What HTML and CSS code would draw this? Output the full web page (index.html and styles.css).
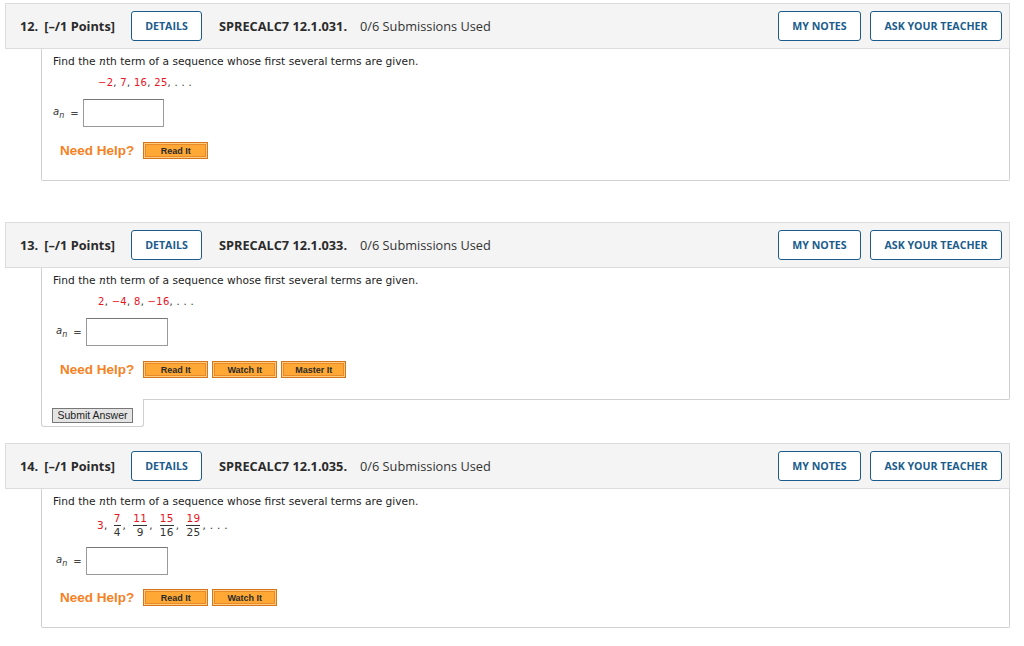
FILE: index.html
```html
<!DOCTYPE html>
<html>
<head>
<meta charset="utf-8">
<link rel="stylesheet" href="styles.css">
</head>
<body>
<div class="page">

  <section class="question">
    <div class="q-header">
      <span class="q-num">12.</span>
      <span class="q-points">[–/1 Points]</span>
      <span class="btn-outline details">DETAILS</span>
      <span class="q-code">SPRECALC7 12.1.031.</span>
      <span class="q-subs">0/6 Submissions Used</span>
      <span class="spacer"></span>
      <span class="btn-outline notes">MY NOTES</span>
      <span class="btn-outline ask">ASK YOUR TEACHER</span>
    </div>
    <div class="q-body">
      <p class="prompt">Find the <i class="n">n</i>th term of a sequence whose first several terms are given.</p>
      <div class="seq"><span class="red">−2</span>, <span class="red">7</span>, <span class="red">16</span>, <span class="red">25</span>, . . .</div>
      <div class="answer a12"><span class="an">a<sub>n</sub></span><span class="eq">=</span><span class="box"></span></div>
      <div class="help"><span class="need">Need Help?</span><span class="hbtn">Read It</span></div>
    </div>
  </section>

  <section class="question q-submit">
    <div class="q-header">
      <span class="q-num">13.</span>
      <span class="q-points">[–/1 Points]</span>
      <span class="btn-outline details">DETAILS</span>
      <span class="q-code">SPRECALC7 12.1.033.</span>
      <span class="q-subs">0/6 Submissions Used</span>
      <span class="spacer"></span>
      <span class="btn-outline notes">MY NOTES</span>
      <span class="btn-outline ask">ASK YOUR TEACHER</span>
    </div>
    <div class="q-body">
      <p class="prompt">Find the <i class="n">n</i>th term of a sequence whose first several terms are given.</p>
      <div class="seq"><span class="red">2</span>, <span class="red">−4</span>, <span class="red">8</span>, <span class="red">−16</span>, . . .</div>
      <div class="answer"><span class="an">a<sub>n</sub></span><span class="eq">=</span><span class="box"></span></div>
      <div class="help"><span class="need">Need Help?</span><span class="hbtn">Read It</span><span class="hbtn">Watch It</span><span class="hbtn">Master It</span></div>
    </div>
    <div class="submit-tab"><span class="submit-btn">Submit Answer</span></div>
  </section>

  <section class="question">
    <div class="q-header">
      <span class="q-num">14.</span>
      <span class="q-points">[–/1 Points]</span>
      <span class="btn-outline details">DETAILS</span>
      <span class="q-code">SPRECALC7 12.1.035.</span>
      <span class="q-subs">0/6 Submissions Used</span>
      <span class="spacer"></span>
      <span class="btn-outline notes">MY NOTES</span>
      <span class="btn-outline ask">ASK YOUR TEACHER</span>
    </div>
    <div class="q-body q-body-frac">
      <p class="prompt">Find the <i class="n">n</i>th term of a sequence whose first several terms are given.</p>
      <div class="frac-seq">
        <span class="lead"><span class="red">3</span>,</span>
        <span class="frac"><span class="red">7</span><span class="bar"></span><span class="den">4</span></span><span class="comma">,</span>
        <span class="frac"><span class="red">11</span><span class="bar"></span><span class="den">9</span></span><span class="comma">,</span>
        <span class="frac"><span class="red">15</span><span class="bar"></span><span class="den">16</span></span><span class="comma">,</span>
        <span class="frac"><span class="red">19</span><span class="bar"></span><span class="den">25</span></span><span class="comma">, . . .</span>
      </div>
      <div class="answer"><span class="an">a<sub>n</sub></span><span class="eq">=</span><span class="box"></span></div>
      <div class="help"><span class="need">Need Help?</span><span class="hbtn">Read It</span><span class="hbtn">Watch It</span></div>
    </div>
  </section>

</div>
</body>
</html>
```

FILE: styles.css
```css
* { box-sizing: border-box; }
html, body { margin: 0; padding: 0; background: #fff; }
.page { padding: 3px 14px 0 5px; }

.question { margin-bottom: 41px; }
.question.q-submit { margin-bottom: 15px; }

.q-header {
  display: flex;
  align-items: center;
  height: 46px;
  padding: 0 7px 0 14px;
  background: #f4f4f4;
  border: 1px solid #dcdcdc;
  font-family: "Open Sans", "Liberation Sans", sans-serif;
  font-size: 12.75px;
  color: #2b2b2b;
}
.q-num { font-weight: 700; margin-right: 6px; }
.q-points { font-weight: 700; margin-right: 16px; }
.q-code { font-weight: 700; margin-left: 17px; margin-right: 13px; }
.q-subs { font-weight: 400; color: #333; }
.spacer { flex: 1; }

.btn-outline {
  display: inline-flex;
  align-items: center;
  justify-content: center;
  height: 30px;
  border: 1px solid #1b5c8c;
  border-radius: 3px;
  background: #fff;
  color: #1b5c8c;
  font-weight: 700;
  font-size: 10.6px;
}
.details { width: 71px; }
.notes { width: 83px; margin-right: 9px; }
.ask { width: 132px; }

.q-body {
  margin-left: 36px;
  border: 1px solid #d0d0d0;
  border-top: none;
  border-radius: 0 0 2px 2px;
  padding: 6px 12px 21px 11px;
  font-family: "DejaVu Sans", Verdana, sans-serif;
  font-size: 10.65px;
  color: #222;
}
.prompt { margin: 0; line-height: 14px; }
.n { font-family: "DejaVu Serif", serif; font-style: italic; }
.seq { margin: 8px 0 0 45px; line-height: 12px; color: #333; font-size: 10px; letter-spacing: 0.3px; }
.red { color: #e8141e; }

.answer { display: flex; align-items: center; margin-top: 10px; }
.an { font-family: "DejaVu Sans", sans-serif; font-style: italic; font-size: 10px; color: #333; margin-left: 3px; }
.an sub { font-size: 8px; vertical-align: -3px; }
.eq { margin: 0 4px 0 6px; color: #444; font-size: 10px; }
.box {
  width: 82px;
  height: 28px;
  border: 1px solid #9a9a9a;
  border-top-color: #777;
  background: #fff;
}
.a12 .an { margin-left: 0; }
.a12 .eq { margin-right: 4px; }
.a12 .box { width: 81px; }

.help { display: flex; align-items: center; margin-top: 15px; margin-left: 7px; }
.need {
  font-family: "Liberation Sans", Arial, sans-serif;
  font-weight: 700;
  font-size: 13.5px;
  color: #f5821f;
  margin-right: 9px;
}
.hbtn {
  display: inline-flex;
  align-items: center;
  justify-content: center;
  width: 65px;
  height: 17px;
  margin-right: 4px;
  background: #ffa836;
  border: 1px solid #d5751b;
  box-shadow: inset 0 0 0 1px #ffcb7e, inset 0 0 0 2px #e98b2a;
  font-family: "Liberation Sans", Arial, sans-serif;
  font-weight: 700;
  font-size: 9px;
  color: #2a2a2a;
}

.frac-seq {
  display: flex;
  align-items: flex-start;
  margin: 4px 0 0 44px;
  font-size: 10.5px;
  line-height: 11px;
  color: #333;
  letter-spacing: 0.3px;
}
.lead { margin-top: 7px; margin-right: 4px; }
.frac { display: inline-flex; flex-direction: column; align-items: center; padding: 0 2px; }
.frac .bar { display: block; width: 100%; height: 1px; background: #333; margin: 1px 0; }
.den { color: #333; }
.comma { margin-top: 7px; margin-right: 5px; }
.q-body-frac .answer { margin-top: 9px; }
.q-body-frac .help { margin-top: 14px; }

.submit-tab {
  margin-left: 36px;
  width: 103px;
  height: 28px;
  border: 1px solid #d0d0d0;
  border-top: none;
  border-radius: 0 0 3px 3px;
  padding: 6px 0 0 10px;
  position: relative;
  top: -1px;
  background: #fff;
}
.submit-btn {
  display: inline-flex;
  align-items: center;
  justify-content: center;
  width: 81px;
  height: 15px;
  background: #e4e4e4;
  border: 1px solid #777;
  font-family: "Liberation Sans", Arial, sans-serif;
  font-size: 10.5px;
  color: #222;
}
```
